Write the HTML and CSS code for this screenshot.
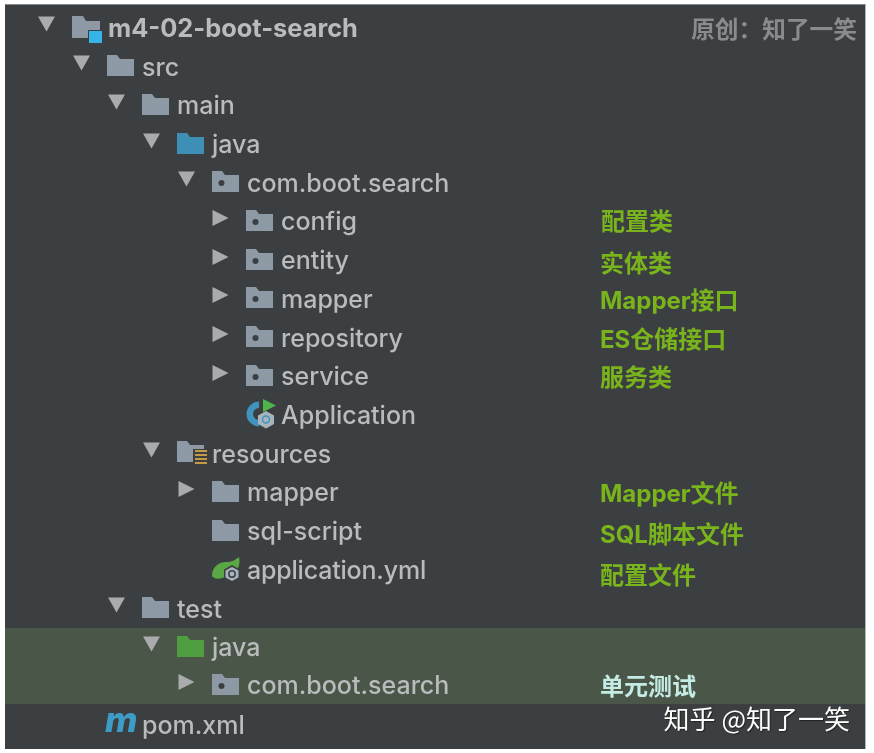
FILE: index.html
```html
<!DOCTYPE html>
<html lang="zh">
<head>
<meta charset="utf-8">
<title>m4-02-boot-search</title>
<link rel="stylesheet" href="styles.css">
</head>
<body>
<svg class="defs" width="0" height="0" aria-hidden="true">
  <defs>
    <symbol id="down" viewBox="0 0 17 15"><path d="M0 0H17L8.5 15Z" fill="#a9abac"/></symbol>
    <symbol id="right" viewBox="0 0 16 16"><path d="M0 0L16 8L0 16Z" fill="#a9abac"/></symbol>
    <symbol id="folder" viewBox="0 0 27 21"><path d="M0 0H10L13 4H27V21H0Z" fill="currentColor"/></symbol>
    <symbol id="pkg" viewBox="0 0 27 21"><path d="M0 0H10L13 4H27V21H0Z" fill="#8d9aa5"/><circle cx="9.500" cy="12" r="3" fill="#3c3f41"/></symbol>
  </defs>
</svg>
<main class="panel">
  <div class="row d0 bold"><svg class="arrow"><use href="#down"/></svg><span class="icon">
    <svg class="root" viewBox="0 0 32 28"><path d="M0 0H11L14 5H28V22H0Z" fill="#8d9aa5"/><rect x="16" y="14" width="15" height="14" fill="#3c3f41"/><rect x="17" y="15" width="13" height="12" fill="#35b4e8"/></svg></span><span class="name">m4-02-boot-search</span></div>
  <div class="row d1"><svg class="arrow"><use href="#down"/></svg><span class="icon grey"><svg class="ico"><use href="#folder"/></svg></span><span class="name">src</span></div>
  <div class="row d2"><svg class="arrow"><use href="#down"/></svg><span class="icon grey"><svg class="ico"><use href="#folder"/></svg></span><span class="name">main</span></div>
  <div class="row d3"><svg class="arrow"><use href="#down"/></svg><span class="icon blue"><svg class="ico"><use href="#folder"/></svg></span><span class="name">java</span></div>
  <div class="row d4"><svg class="arrow"><use href="#down"/></svg><span class="icon"><svg class="ico"><use href="#pkg"/></svg></span><span class="name">com.boot.search</span></div>
  <div class="row d5"><svg class="arrow"><use href="#right"/></svg><span class="icon"><svg class="ico"><use href="#pkg"/></svg></span><span class="name">config</span><span class="note n-up">配置类</span></div>
  <div class="row d5"><svg class="arrow"><use href="#right"/></svg><span class="icon"><svg class="ico"><use href="#pkg"/></svg></span><span class="name">entity</span><span class="note n-down">实体类</span></div>
  <div class="row d5"><svg class="arrow"><use href="#right"/></svg><span class="icon"><svg class="ico"><use href="#pkg"/></svg></span><span class="name">mapper</span><span class="note">Mapper接口</span></div>
  <div class="row d5"><svg class="arrow"><use href="#right"/></svg><span class="icon"><svg class="ico"><use href="#pkg"/></svg></span><span class="name">repository</span><span class="note">ES仓储接口</span></div>
  <div class="row d5"><svg class="arrow"><use href="#right"/></svg><span class="icon"><svg class="ico"><use href="#pkg"/></svg></span><span class="name">service</span><span class="note">服务类</span></div>
  <div class="row d5"><span class="arrow"></span><span class="icon">
    <svg class="tall" viewBox="0 0 31 31"><path d="M13 2.500A12.500 12.500 0 1 0 13 27.500L13 21A6 6 0 1 1 13 9Z" fill="#3f93bd"/><path d="M17 0L30 6.500L17 13Z" fill="#4fb54a"/><path d="M20 12L28 16.500V25L20 29.500L12 25V16.500Z" fill="#a8b4bc"/><circle cx="20" cy="20.500" r="3.500" fill="none" stroke="#3f93bd" stroke-width="1.500"/></svg></span><span class="name">Application</span></div>
  <div class="row d3"><svg class="arrow"><use href="#down"/></svg><span class="icon">
    <svg class="tall" viewBox="0 0 31 31"><path d="M0 3H10L13 7H27V24H0Z" fill="#8d9aa5"/><rect x="16" y="11" width="15" height="19" fill="#3c3f41"/><path d="M18 13H30M18 17H30M18 21H30M18 25H30" stroke="#c49a45" stroke-width="2"/></svg></span><span class="name">resources</span></div>
  <div class="row d4"><svg class="arrow"><use href="#right"/></svg><span class="icon grey"><svg class="ico"><use href="#folder"/></svg></span><span class="name">mapper</span><span class="note">Mapper文件</span></div>
  <div class="row d4"><span class="arrow"></span><span class="icon grey"><svg class="ico"><use href="#folder"/></svg></span><span class="name">sql-script</span><span class="note n-down2">SQL脚本文件</span></div>
  <div class="row d4"><span class="arrow"></span><span class="icon">
    <svg class="tall" viewBox="0 0 31 31"><path d="M0 22C0 12 8 8 14 8C20 8 23 6 27 3C29 11 25 21 15 22C9 25 3 26 0 22Z" fill="#5aa845"/><path d="M20 11L28 15.500V24L20 28.500L12 24V15.500Z" fill="#3c3f41"/><path d="M20 13L26.500 16.500V23.500L20 27L13.500 23.500V16.500Z" fill="#a8b4bc"/><circle cx="20" cy="20" r="3.200" fill="none" stroke="#3c3f41" stroke-width="1.500"/></svg></span><span class="name tight">application.yml</span><span class="note n-low">配置文件</span></div>
  <div class="row d2"><svg class="arrow"><use href="#down"/></svg><span class="icon grey"><svg class="ico"><use href="#folder"/></svg></span><span class="name">test</span></div>
  <div class="row d3 hl"><svg class="arrow"><use href="#down"/></svg><span class="icon green"><svg class="ico"><use href="#folder"/></svg></span><span class="name">java</span></div>
  <div class="row d4 hl"><svg class="arrow"><use href="#right"/></svg><span class="icon"><svg class="ico"><use href="#pkg"/></svg></span><span class="name">com.boot.search</span><span class="note light">单元测试</span></div>
  <div class="row d1"><span class="arrow"></span><span class="icon"><span class="maven">m</span></span><span class="name">pom.xml</span></div>
  <div class="credit">原创：知了一笑</div>
  <div class="mark">知乎 @知了一笑</div>
</main>
</body>
</html>
```
FILE: styles.css
```css
html, body {
  margin: 0;
  padding: 0;
  background: #fff;
}
.defs {
  position: absolute;
}
.panel {
  position: relative;
  box-sizing: border-box;
  width: 861px;
  height: 745px;
  margin: 4px 0 0 5px;
  padding-top: 3px;
  background: #3c3f41;
  border-top: 1px solid #8a8a8a;
  border-right: 1px solid #b5b5b5;
  font-family: Inter, "Noto Sans CJK SC", sans-serif;
  font-size: 25px;
  color: #b9bbbd;
  filter: blur(0.4px);
}
.row {
  display: flex;
  align-items: center;
  height: 38.72px;
}
.d0 { padding-left: 33px; }
.d1 { padding-left: 68px; }
.d2 { padding-left: 103px; }
.d3 { padding-left: 138px; }
.d4 { padding-left: 173px; }
.d5 { padding-left: 207px; }
.bold .name {
  font-size: 25.400px;
  font-weight: 700;
  margin-top: 0;
}
.arrow {
  flex: none;
  width: 17px;
  height: 16px;
  margin-right: 17px;
  margin-top: -6px;
}
.icon {
  flex: none;
  display: flex;
  align-items: center;
  width: 35px;
  height: 30px;
}
.ico {
  width: 27px;
  height: 21px;
  margin-top: -1px;
}
.root {
  flex: none;
  width: 32px;
  height: 28px;
  margin-top: 5px;
}
.tall {
  flex: none;
  width: 31px;
  height: 31px;
}
.bold .icon {
  width: 36px;
}
.grey { color: #8d9aa5; }
.blue { color: #3d8fb5; }
.green { color: #4f9e3f; }
.name {
  width: 300px;
  margin-top: 1px;
  font-weight: 500;
  white-space: nowrap;
}
.tight {
  letter-spacing: -0.2px;
}
.note {
  position: absolute;
  left: 595px;
  font-size: 24px;
  font-weight: 700;
  color: #79b41c;
  white-space: nowrap;
}
.n-up { margin-top: -2px; left: 596px; }
.n-down { margin-top: 3px; }
.n-down2 { margin-top: 4px; }
.n-low { margin-top: 8px; }
.light { color: #c4ece4; }
.hl {
  background: #4a5648;
}
.hl + .hl {
  height: 37.500px;
  margin-bottom: 1.220px;
}
.maven {
  margin-left: -2px;
  margin-top: -10px;
  font-size: 35px;
  font-weight: 800;
  font-style: italic;
  line-height: 1;
  color: #3e9dc6;
}
.credit {
  position: absolute;
  top: 6px;
  right: 8px;
  font-size: 23.700px;
  font-weight: 700;
  color: #8a8b8c;
}
.mark {
  position: absolute;
  right: 15px;
  bottom: 13px;
  font-family: "Noto Sans CJK SC", sans-serif;
  font-size: 26px;
  color: #fff;
  text-shadow: 1px 1px 1px #222;
}
```
